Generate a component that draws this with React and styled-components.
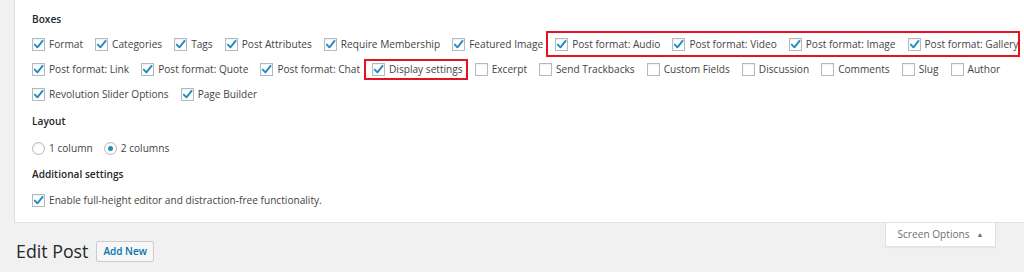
import React from "react";
import styled, { createGlobalStyle } from "styled-components";

const GlobalStyle = createGlobalStyle`
    html, body {
        margin: 0;
        padding: 0;
        background: #f1f1f1;
        overflow: hidden;
    }
    body {
        font-family: "Open Sans", "Noto Sans", sans-serif;
        color: #444;
    }
`

const boxRows = [
    [
        { label: "Format", on: true },
        { label: "Categories", on: true },
        { label: "Tags", on: true },
        { label: "Post Attributes", on: true },
        { label: "Require Membership", on: true },
        { label: "Featured Image", on: true },
        {
            mark: { top: -1, bottom: 0, left: -9, right: -2 },
            items: [
                { label: "Post format: Audio", on: true },
                { label: "Post format: Video", on: true },
                { label: "Post format: Image", on: true },
                { label: "Post format: Gallery", on: true },
            ],
        },
    ],
    [
        { label: "Post format: Link", on: true },
        { label: "Post format: Quote", on: true },
        { label: "Post format: Chat", on: true },
        {
            mark: { top: 2, bottom: 2, left: -8, right: -5 },
            items: [{ label: "Display settings", on: true }],
        },
        { label: "Excerpt" },
        { label: "Send Trackbacks" },
        { label: "Custom Fields" },
        { label: "Discussion" },
        { label: "Comments" },
        { label: "Slug" },
        { label: "Author" },
    ],
    [
        { label: "Revolution Slider Options", on: true },
        { label: "Page Builder", on: true },
    ],
]

function Check(props){
    return(
        <CheckLabel>
            <Box>
                {props.on && (
                    <svg width="13" height="13" viewBox="0 0 13 13">
                        <path d="M2.8 6.6 L5.4 9.3 L10.6 2.9" fill="none" stroke="#1e8cbe" strokeWidth="1.9" strokeLinecap="round" strokeLinejoin="round"/>
                    </svg>
                )}
            </Box>
            <LabelText>{props.label}</LabelText>
        </CheckLabel>
    )
}

function Radio(props){
    return(
        <CheckLabel>
            <RadioCircle>{props.on && <RadioDot/>}</RadioCircle>
            <LabelText>{props.label}</LabelText>
        </CheckLabel>
    )
}

export default function App(){
    return(
        <>
            <GlobalStyle/>
            <ScreenMeta>
                <Heading>Boxes</Heading>
                <Rows>
                    {boxRows.map((row, i) => (
                        <Row key={i}>
                            {row.map((item, j) => item.items ? (
                                <Highlight key={j} $mark={item.mark}>
                                    {item.items.map(sub => <Check key={sub.label} {...sub}/>)}
                                </Highlight>
                            ) : (
                                <Check key={j} {...item}/>
                            ))}
                        </Row>
                    ))}
                </Rows>
                <Heading $top={7}>Layout</Heading>
                <Row $top={7}>
                    <RadioGroup>
                        <Radio label="1 column"/>
                        <Radio label="2 columns" on/>
                    </RadioGroup>
                </Row>
                <Heading $top={6}>Additional settings</Heading>
                <Row $top={6}>
                    <Check label="Enable full-height editor and distraction-free functionality." on/>
                </Row>
            </ScreenMeta>
            <TopBar>
                <TitleWrap>
                    <Title>Edit Post</Title>
                    <AddNew>Add New</AddNew>
                </TitleWrap>
                <Tab>
                    Screen Options
                    <Arrow>▲</Arrow>
                </Tab>
            </TopBar>
        </>
    )
}

const ScreenMeta = styled.div`
    position: relative;
    margin-left: 14px;
    background: #fff;
    border-left: 1px solid #e1e1e1;
    border-bottom: 1px solid #e1e1e1;
    padding: 12px 0 9px 17px;
    box-sizing: border-box;
    height: 223px;
`

const Heading = styled.div`
    margin-top: ${props => props.$top || 0}px;
    height: 15px;
    line-height: 15px;
    font-size: 10.15px;
    font-weight: 600;
    color: #23282d;
`

const Rows = styled.div`
    margin-top: 5px;
`

const Row = styled.div`
    margin-top: ${props => props.$top || 0}px;
    display: flex;
    align-items: center;
    gap: 12px;
    height: 25px;
    white-space: nowrap;
`

const RadioGroup = styled.div`
    display: flex;
    align-items: center;
    gap: 11px;
`

const Highlight = styled.span`
    position: relative;
    display: flex;
    align-items: center;
    align-self: stretch;
    gap: 12px;
    &::after{
        content: "";
        position: absolute;
        top: ${props => props.$mark.top}px;
        bottom: ${props => props.$mark.bottom}px;
        left: ${props => props.$mark.left}px;
        right: ${props => props.$mark.right}px;
        border: 2px solid #e4141e;
        pointer-events: none;
    }
`

const CheckLabel = styled.label`
    display: inline-flex;
    align-items: center;
    gap: 4px;
`

const Box = styled.span`
    display: inline-flex;
    align-items: center;
    justify-content: center;
    width: 13px;
    height: 13px;
    box-sizing: border-box;
    border: 1px solid #b4b9be;
    background: #fff;
    box-shadow: inset 0 1px 2px rgba(0,0,0,0.07);
    svg{
        flex: none;
    }
`

const RadioCircle = styled(Box)`
    border-radius: 50%;
`

const RadioDot = styled.span`
    width: 5px;
    height: 5px;
    border-radius: 50%;
    background: #1e8cbe;
`

const LabelText = styled.span`
    font-size: 10.15px;
    line-height: 15px;
    color: #444;
`

const TopBar = styled.div`
    display: flex;
    justify-content: space-between;
    align-items: flex-start;
`

const TitleWrap = styled.div`
    display: flex;
    align-items: center;
    padding: 17px 0 0 16px;
`

const Title = styled.h1`
    margin: 0;
    font-size: 17.8px;
    line-height: 22px;
    font-weight: 400;
    color: #23282d;
`

const AddNew = styled.a`
    margin-left: 8px;
    display: inline-flex;
    align-items: center;
    height: 21px;
    box-sizing: border-box;
    padding: 0 6px;
    border: 1px solid #ccc;
    border-radius: 2px;
    background: #f7f7f7;
    color: #0073aa;
    font-size: 10px;
    font-weight: 600;
    cursor: pointer;
`

const Tab = styled.div`
    margin: -1px 28px 0 0;
    width: 111px;
    height: 25px;
    box-sizing: border-box;
    display: flex;
    align-items: center;
    justify-content: center;
    gap: 7px;
    background: #fff;
    border: 1px solid #e1e1e1;
    border-top: none;
    box-shadow: 0 1px 1px rgba(0,0,0,0.04);
    font-size: 10.15px;
    color: #6b6f73;
`

const Arrow = styled.span`
    font-size: 7px;
    color: #6b6f73;
`
